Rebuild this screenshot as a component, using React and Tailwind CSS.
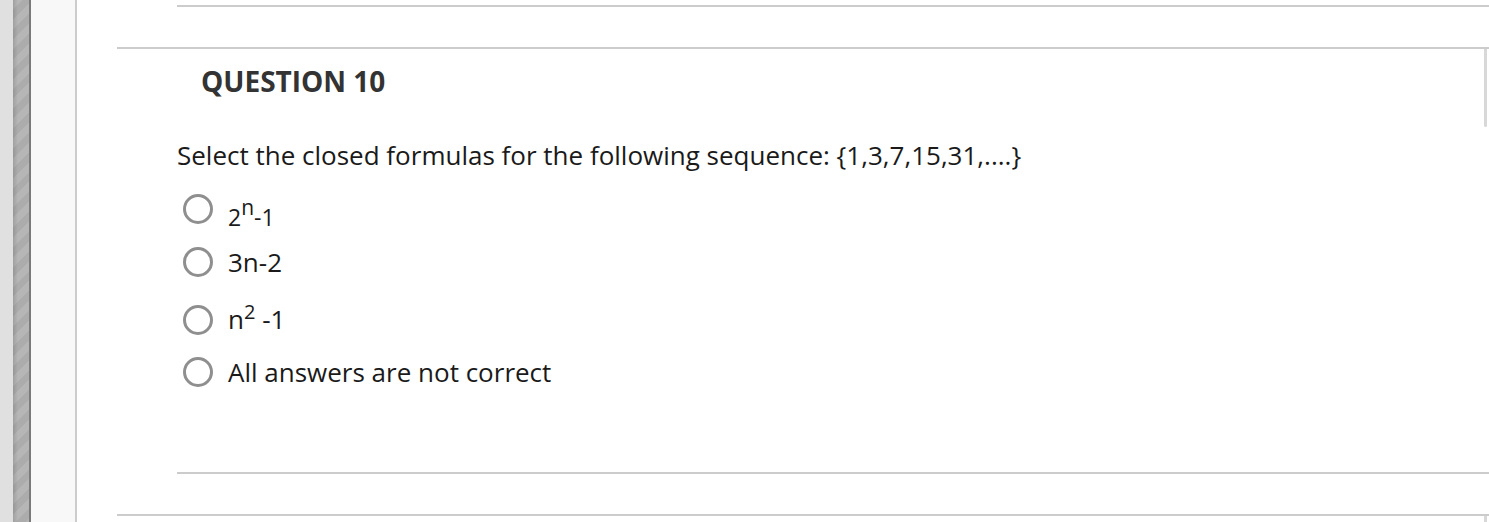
import React from "react";

function Radio() {
  return <div className="w-[30px] h-[30px] rounded-full border-[3px] border-[#8f8f8f] bg-white shrink-0" />;
}

function Option({ children, className = "" }) {
  return (
    <div className={"flex items-center h-[55px] gap-[15px] " + className}>
      <Radio />
      <div className="text-[26px] leading-[36px] text-[#1a1a1a]">{children}</div>
    </div>
  );
}

export default function App() {
  return (
    <div className="flex w-[1489px] h-[522px] overflow-hidden bg-white" style={{ fontFamily: '"Open Sans", sans-serif' }}>
      <div className="w-[13px] bg-[#e0e0e0] shrink-0" />
      <div className="w-[16px] shrink-0 bg-[repeating-linear-gradient(135deg,#b6b6b6_0px,#b6b6b6_7px,#acacac_7px,#acacac_14px)]">
        <div className="h-full w-[5px] bg-[linear-gradient(90deg,rgba(0,0,0,0.12),rgba(0,0,0,0))]" />
      </div>
      <div className="w-[2px] bg-[#7a7a7a] shrink-0" />
      <div className="w-[44px] bg-[#f8f8f8] shrink-0" />
      <div className="w-[2px] bg-[#cccccc] shrink-0" />
      <div className="flex-1 flex flex-col">
        <div className="pt-[5px] pl-[100px]">
          <div className="h-[2px] bg-[#cccccc]" />
        </div>
        <div className="mt-[40px] ml-[40px] border-t-2 border-[#cccccc] flex flex-col">
          <div className="flex">
            <div className="flex-1 flex flex-col">
              <div className="pl-[84px] pt-[13px] text-[28px] leading-[38px] font-bold text-[#333333]">QUESTION 10</div>
              <div className="pl-[60px] mt-[38px] text-[26px] leading-[34px] text-[#1a1a1a]">
                Select the closed formulas for the following sequence: {"{1,3,7,15,31,....}"}
              </div>
              <div className="pl-[66px] mt-[9px] flex flex-col">
                <Option>
                  <span className="relative top-[8px] text-[23px]">2</span>
                  <span className="relative -top-[3px] text-[21px]">n</span>
                  <span className="relative top-[8px] text-[23px]">-1</span>
                </Option>
                <Option className="pb-[3px]">3n-2</Option>
                <Option className="pt-[3px]">
                  <span>n</span>
                  <span className="relative -top-[10px] text-[20px]">2</span>
                  <span> -1</span>
                </Option>
                <Option className="pb-[3px]">All answers are not correct</Option>
              </div>
            </div>
            <div className="w-[5px] shrink-0">
              <div className="w-[3px] h-[78px] bg-[#d8d8d8] rounded-b-[3px]" />
            </div>
          </div>
          <div className="mt-[71px] ml-[60px] h-[2px] bg-[#cccccc]" />
        </div>
        <div className="mt-[40px] ml-[40px] border-t-2 border-[#cccccc] flex justify-end">
          <div className="w-[3px] h-[10px] bg-[#d8d8d8] mr-[2px]" />
        </div>
      </div>
    </div>
  );
}
